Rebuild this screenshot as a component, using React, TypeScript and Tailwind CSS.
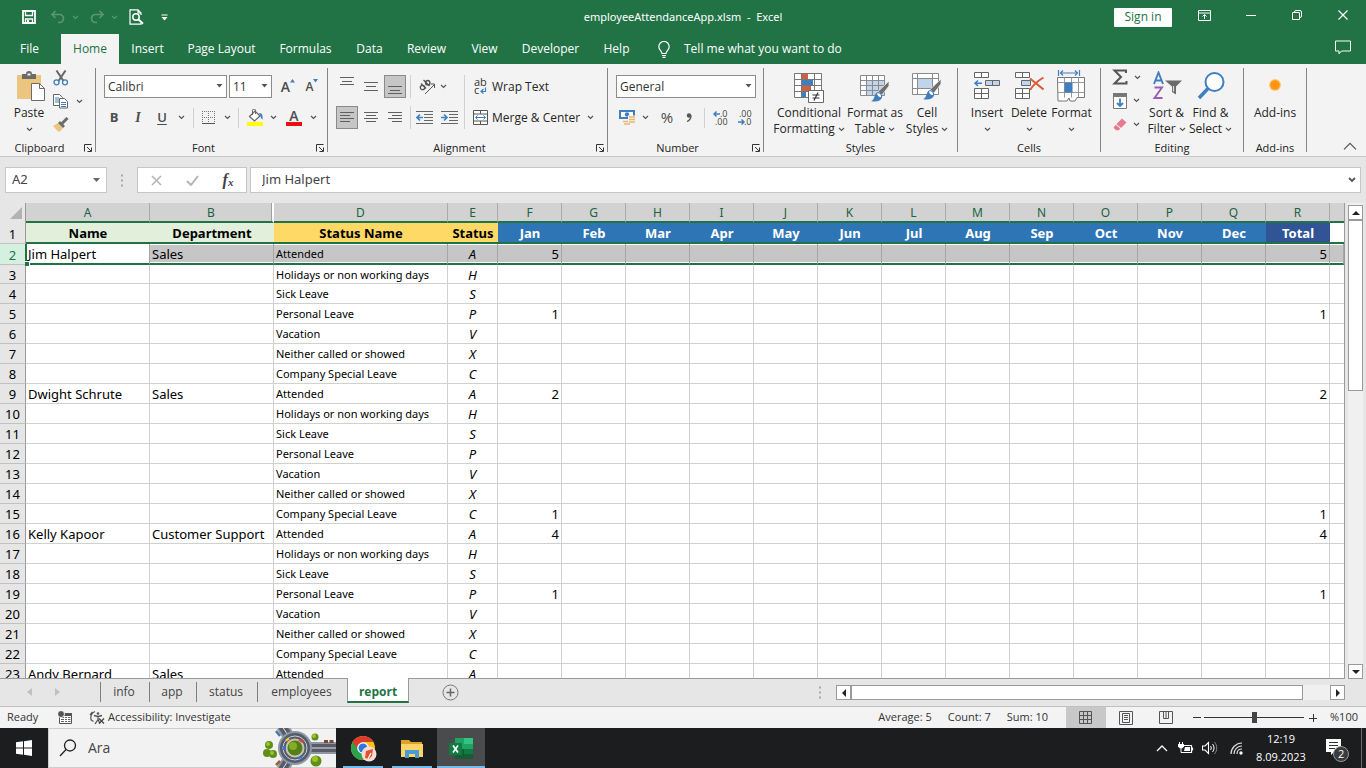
import React from "react";

type Kids = { children?: React.ReactNode };

const BLUE = "#3f7fbf";

/* ---------- small shared pieces ---------- */

function Icon({ w, h, children, className = "" }: Kids & { w: number; h: number; className?: string }) {
  return (
    <svg width={w} height={h} viewBox={`0 0 ${w} ${h}`} fill="none" className={`shrink-0 ${className}`} aria-hidden="true">
      {children}
    </svg>
  );
}

function Chevron({ color = "#555" }: { color?: string }) {
  return (
    <Icon w={7} h={5}>
      <path d="M1 1l2.5 2.4L6 1" stroke={color} strokeWidth="1.2" />
    </Icon>
  );
}

function Btn({ label, className = "", children }: Kids & { label: string; className?: string }) {
  return (
    <button type="button" aria-label={label} className={`flex shrink-0 items-center justify-center ${className}`}>
      {children}
    </button>
  );
}

function Sep({ className = "" }: { className?: string }) {
  return <span className={`w-px shrink-0 bg-[#d0d0d0] ${className}`} />;
}

function Drop({ label, value, className }: { label: string; value: string; className: string }) {
  return (
    <span className={`relative flex h-[23px] shrink-0 ${className}`}>
      <select aria-label={label} defaultValue={value} className="w-full appearance-none rounded-none border border-[#8c8c8c] bg-white pl-[3px] text-xs text-[#333]">
        <option>{value}</option>
      </select>
      <Icon w={7} h={4} className="pointer-events-none absolute top-[9px] right-1">
        <path d="M0.5 0h6l-3 3.5z" fill="#555" />
      </Icon>
    </span>
  );
}

function Group({ label, width, launcher, children }: Kids & { label: string; width: string; launcher?: boolean }) {
  return (
    <>
      <section aria-label={label} className={`flex shrink-0 flex-col ${width}`}>
        <div className="h-[76px]">{children}</div>
        <div className="flex h-4 items-center text-[11px] leading-4 text-[#222]">
          <span className="flex-1 text-center">{label}</span>
          {launcher && (
            <Btn label={`${label} settings`} className="w-4">
              <Icon w={8} h={8} className="ml-px">
                <path d="M7.5 0.5h-7v7M3 3l4 4M7.5 3.5v4h-4" stroke="#333" />
              </Icon>
            </Btn>
          )}
        </div>
      </section>
      <span className="mt-1 h-[84px] w-px shrink-0 bg-[#858585]" />
    </>
  );
}

function Big({ lines, width, drop, inlineDrop, children }: Kids & { lines: string[]; width: string; drop?: boolean; inlineDrop?: boolean }) {
  return (
    <button type="button" className={`flex shrink-0 flex-col items-center pt-1.5 text-xs leading-4 text-[#262626] ${width}`}>
      <span className="mb-[3px] flex h-8 items-center justify-center">{children}</span>
      <span className="whitespace-nowrap">{lines[0]}</span>
      {lines[1] && (
        <span className="flex items-center gap-[3px] whitespace-nowrap">
          {lines[1]}
          {inlineDrop && <Chevron />}
        </span>
      )}
      {drop && (
        <span className="flex h-4 items-center">
          <Chevron />
        </span>
      )}
    </button>
  );
}

/* ---------- title bar ---------- */

function TitleBar() {
  return (
    <header className="grid h-[34px] shrink-0 grid-cols-[1fr_auto_1fr] items-center text-white">
      <div className="flex items-center pl-[18px]">
        <Btn label="Save" className="w-[22px]">
          <Icon w={14} h={14}>
            <path d="M1 1h12v12H1z" stroke="#fff" strokeWidth="1.8" />
            <path d="M3.5 1.5v4h7v-4M3.5 13V9h7v4" stroke="#fff" strokeWidth="1.3" />
            <path d="M5 10h2v3H5z" fill="#fff" />
          </Icon>
        </Btn>
        <Btn label="Undo" className="ml-[7px] w-[22px]">
          <Icon w={16} h={14}>
            <path d="M5.5 1L2 4.5 5.5 8M2 4.5h7.5a4 4 0 010 8H8" stroke="#5b9573" strokeWidth="1.7" />
          </Icon>
        </Btn>
        <Btn label="Undo list" className="w-3">
          <Chevron color="#5b9573" />
        </Btn>
        <Btn label="Redo" className="ml-[5px] w-[22px]">
          <Icon w={16} h={14}>
            <path d="M10.5 1L14 4.5 10.5 8M14 4.5H6.5a4 4 0 000 8H8" stroke="#5b9573" strokeWidth="1.7" />
          </Icon>
        </Btn>
        <Btn label="Redo list" className="w-3">
          <Chevron color="#5b9573" />
        </Btn>
        <Btn label="Print preview" className="ml-[5px] w-[22px]">
          <Icon w={15} h={16}>
            <path d="M12 6V4L9 0.8H1v14.4h11V14M9 1v3h3" stroke="#fff" strokeWidth="1.2" />
            <circle cx="7" cy="8" r="3.2" stroke="#fff" strokeWidth="1.5" />
            <path d="M9.5 10.5l4.500 4.300" stroke="#fff" strokeWidth="2" />
          </Icon>
        </Btn>
        <Btn label="Customize toolbar" className="ml-[7px] w-5">
          <Icon w={7} h={7}>
            <path d="M0.5 1h6" stroke="#fff" />
            <path d="M0.5 3h6l-3 3.500z" fill="#fff" />
          </Icon>
        </Btn>
      </div>
      <h1 className="pt-px font-['Noto_Sans',sans-serif] text-[11px] whitespace-pre">employeeAttendanceApp.xlsm  -  Excel</h1>
      <div className="flex items-center justify-end">
        <button type="button" className="h-[19px] w-[58px] rounded-[1px] bg-white text-xs leading-4 text-[#217346]">
          Sign in
        </button>
        <Btn label="Ribbon display options" className="ml-[9px] h-8 w-[47px]">
          <Icon w={13} h={11} className="-mt-1">
            <path d="M0.5 0.5h12v10H0.500zM0.500 3h12M6.500 9V4.500M4.500 6.500l2-2 2 2" stroke="#fff" />
          </Icon>
        </Btn>
        <Btn label="Minimize" className="h-8 w-[46px]">
          <Icon w={10} h={11} className="-mt-1">
            <path d="M0 5.500h10" stroke="#fff" />
          </Icon>
        </Btn>
        <Btn label="Restore" className="h-8 w-[46px]">
          <Icon w={10} h={10} className="-mt-1">
            <path d="M0.500 2.500h7v7h-7zM2.500 2.500V2A1.500 1.500 0 014 .500h4A1.500 1.500 0 019.500 2v4A1.500 1.500 0 018 7.500h-.500" stroke="#fff" />
          </Icon>
        </Btn>
        <Btn label="Close" className="h-8 w-[46px]">
          <Icon w={10} h={10} className="-mt-1">
            <path d="M0.500 0.500l9 9M9.500 0.500l-9 9" stroke="#fff" strokeWidth="1.200" />
          </Icon>
        </Btn>
      </div>
    </header>
  );
}

const RIBBON_TABS = [
  { name: "File", w: "w-[59px] mr-0.5" },
  { name: "Home", w: "w-[58px]" },
  { name: "Insert", w: "w-[57px]" },
  { name: "Page Layout", w: "w-[91px]" },
  { name: "Formulas", w: "w-[77px]" },
  { name: "Data", w: "w-[51px]" },
  { name: "Review", w: "w-[63px]" },
  { name: "View", w: "w-[53px]" },
  { name: "Developer", w: "w-[79px]" },
  { name: "Help", w: "w-[53px]" },
];

function RibbonTabs() {
  return (
    <nav className="flex h-[30px] shrink-0 text-xs text-white">
      {RIBBON_TABS.map((t) => (
        <button key={t.name} type="button" className={`shrink-0 whitespace-nowrap ${t.w} ${t.name === "Home" ? "bg-[#f3f3f3] text-[#217346]" : ""}`}>
          {t.name}
        </button>
      ))}
      <button type="button" className="ml-[15px] flex items-center gap-3.5 whitespace-nowrap">
        <Icon w={12} h={17}>
          <path d="M4 12.500c0-2-3.200-3.500-3.200-6.800a5.200 5.200 0 0110.400 0c0 3.300-3.200 4.800-3.200 6.800zM4 14.500h4M4.500 16.300h3" stroke="#fff" strokeWidth="1.200" />
        </Icon>
        Tell me what you want to do
      </button>
      <Btn label="Comments" className="mr-[15px] ml-auto">
        <Icon w={16} h={15} className="-mt-1">
          <path d="M0.500 1h15v10H6.500L4 13.800V11H0.500z" stroke="#fff" />
        </Icon>
      </Btn>
    </nav>
  );
}

/* ---------- ribbon ---------- */

function Lines({ rows, h = 13 }: { rows: [number, number, number][]; h?: number }) {
  return (
    <Icon w={14} h={h}>
      {rows.map(([x1, x2, y]) => (
        <path key={y} d={`M${x1} ${y}H${x2}`} stroke="#5f5f5f" />
      ))}
    </Icon>
  );
}

function Clipboard() {
  return (
    <Group label="Clipboard" width="w-[95px]" launcher>
      <div className="flex">
        <Big lines={["Paste"]} width="ml-2 w-[42px]" drop>
          <Icon w={30} h={32} className="ml-1">
            <path d="M1 5h24v24H1z" fill="#ecc581" />
            <path d="M6 4h4a3 3 0 016 0h4v5H6z" fill="#6b6b6b" />
            <path d="M11.500 5.500h3V3.500h-3z" fill="#f3f3f3" />
            <path d="M15.500 13.500h8l5 5v12h-13z" fill="#fff" stroke="#6b6b6b" />
            <path d="M23.500 13.500v5h5" stroke="#6b6b6b" />
          </Icon>
        </Big>
        <div className="flex flex-col gap-[7px] pt-1.5">
          <Btn label="Cut" className="h-4 w-[22px]">
            <Icon w={16} h={16}>
              <path d="M3.500 0.500l7 10.500M12.500 0.500l-7 10.500" stroke="#666" strokeWidth="2" />
              <circle cx="3.500" cy="12.300" r="2.500" stroke={BLUE} strokeWidth="1.300" />
              <circle cx="12" cy="12.300" r="2.500" stroke={BLUE} strokeWidth="1.300" />
            </Icon>
          </Btn>
          <div className="flex h-4">
            <Btn label="Copy" className="w-[22px]">
              <Icon w={16} h={15}>
                <path d="M.500 .500h6l3 3v8h-9z" fill="#fff" stroke="#666" />
                <path d="M2 4h4M2 6h4M2 8h4" stroke={BLUE} />
                <path d="M6.500 4.500h5l3 3v6.500h-8z" fill="#fff" stroke="#666" />
                <path d="M8 8.500h5M8 10.500h5M8 12.500h5" stroke={BLUE} />
              </Icon>
            </Btn>
            <Btn label="Copy options" className="w-3.5">
              <Chevron />
            </Btn>
          </div>
          <Btn label="Format Painter" className="h-4 w-[22px]">
            <Icon w={16} h={15}>
              <path d="M0 9l5-3 5 5-3 3.500H5z" fill="#ecc581" />
              <path d="M5 6l2-2 5 5-2 2z" fill="#6b6b6b" />
              <path d="M9 6.500l5.500-5.500" stroke="#6b6b6b" strokeWidth="3" />
            </Icon>
          </Btn>
        </div>
      </div>
    </Group>
  );
}

function FontGroup() {
  return (
    <Group label="Font" width="w-[231px]" launcher>
      <div className="flex flex-col gap-2 pt-[11px] pl-2 text-[#4d4d4d]">
        <div className="flex h-[23px] gap-0.5">
          <Drop label="Font name" value="Calibri" className="w-[123px]" />
          <Drop label="Font size" value="11" className="w-[43px]" />
          <Btn label="Increase font size" className="w-6 pl-1 text-sm font-semibold">
            A
            <Icon w={5} h={4} className="mb-3">
              <path d="M0 3.500h5L2.500 0z" fill={BLUE} />
            </Icon>
          </Btn>
          <Btn label="Decrease font size" className="w-6 text-xs font-semibold">
            A
            <Icon w={5} h={4} className="mb-3">
              <path d="M0 0h5L2.500 3.500z" fill={BLUE} />
            </Icon>
          </Btn>
        </div>
        <div className="flex h-[23px] items-center">
          <Btn label="Bold" className="mr-1 w-5 text-[13px] font-bold">B</Btn>
          <Btn label="Italic" className="mr-1 w-5 font-['Liberation_Serif',serif] text-sm font-bold italic">I</Btn>
          <Btn label="Underline" className="w-5 text-[13px] font-semibold underline underline-offset-2">U</Btn>
          <Btn label="Underline options" className="h-5 w-[18px]"><Chevron /></Btn>
          <Sep className="mx-[3px] h-5" />
          <Btn label="Borders" className="w-[23px]">
            <Icon w={13} h={13}>
              <path d="M.500 0v13M6.500 0v13M12.500 0v13M0 .500h13M0 6.500h13" stroke="#777" strokeDasharray="1 1" />
              <path d="M0 12.500h13" stroke="#555" />
            </Icon>
          </Btn>
          <Btn label="Border options" className="h-5 w-3.5"><Chevron /></Btn>
          <Sep className="mx-1 h-5" />
          <Btn label="Fill color" className="w-6">
            <Icon w={16} h={17}>
              <path d="M2.500 7.500L8 2l5 5-5.500 5z" fill="#fff" stroke="#666" strokeWidth="1.200" />
              <path d="M5.500 6V1.500a1.500 1.500 0 013 0V5" stroke="#666" />
              <path d="M12 4c3 0 4 2 3.500 6.500C14.500 10 13.500 9 13.500 7z" fill={BLUE} />
              <path d="M0 13h16v4H0z" fill="#ff0" />
            </Icon>
          </Btn>
          <Btn label="Fill options" className="h-5 w-3"><Chevron /></Btn>
          <Btn label="Font color" className="ml-0.5 w-[26px] flex-col">
            <span className="text-sm leading-[13px] font-semibold">A</span>
            <span className="h-1 w-4 bg-[#e81010]" />
          </Btn>
          <Btn label="Font color options" className="h-5 w-3"><Chevron /></Btn>
        </div>
      </div>
    </Group>
  );
}

function Alignment() {
  const on = "border border-[#8a8a8a] bg-[#c6c6c6]";
  return (
    <Group label="Alignment" width="w-[279px]" launcher>
      <div className="flex pt-[11px] pl-2 text-xs text-[#262626]">
        <div className="flex flex-col gap-2">
          <div className="flex h-[23px] gap-0.5">
            <Btn label="Top Align" className="w-[22px] pb-2.5"><Lines h={9} rows={[[0, 14, 0.5], [2, 12, 4.5], [0, 14, 7.5]]} /></Btn>
            <Btn label="Middle Align" className="w-[22px]"><Lines h={9} rows={[[0, 14, 0.5], [2, 12, 4.5], [0, 14, 8.5]]} /></Btn>
            <Btn label="Bottom Align" className={`w-[22px] pt-2 ${on}`}><Lines h={9} rows={[[0, 14, 0.5], [2, 12, 4.5], [0, 14, 7.5]]} /></Btn>
            <Sep className="ml-0.5 h-full" />
            <Btn label="Orientation" className="w-6 pl-1">
              <Icon w={17} h={16}>
                <circle cx="3.500" cy="8.500" r="2.200" stroke="#555" strokeWidth="1.300" />
                <path d="M2 4.500l5 5M4.500 1l6 6" stroke="#555" strokeWidth="1.300" />
                <circle cx="8.700" cy="3.700" r="2.200" stroke="#555" strokeWidth="1.300" />
                <path d="M6 15L15.500 5.500M11.500 5h4v4" stroke="#555" />
              </Icon>
            </Btn>
            <Btn label="Orientation options" className="w-2"><Chevron /></Btn>
          </div>
          <div className="flex h-[23px] gap-0.5">
            <Btn label="Align Left" className={`w-[22px] ${on}`}><Lines rows={[[0, 14, 1.5], [0, 10, 4.5], [0, 14, 7.5], [0, 10, 10.5]]} /></Btn>
            <Btn label="Center" className="w-[22px]"><Lines rows={[[0, 14, 1.5], [2, 12, 4.5], [0, 14, 7.5], [2, 12, 10.5]]} /></Btn>
            <Btn label="Align Right" className="w-[22px]"><Lines rows={[[0, 14, 1.5], [4, 14, 4.5], [0, 14, 7.5], [4, 14, 10.5]]} /></Btn>
            <Sep className="ml-0.5 h-full" />
            <Btn label="Decrease Indent" className="w-[23px]">
              <Icon w={17} h={13}>
                <path d="M0 .500h17M8 3.500h9M8 6.500h9M8 9.500h9M0 12.500h17" stroke="#666" />
                <path d="M1 6.500h6M4 3.500l-3 3 3 3" stroke={BLUE} strokeWidth="1.600" />
              </Icon>
            </Btn>
            <Btn label="Increase Indent" className="w-[23px]">
              <Icon w={17} h={13}>
                <path d="M0 .500h17M8 3.500h9M8 6.500h9M8 9.500h9M0 12.500h17" stroke="#666" />
                <path d="M0 6.500h6M3 3.500l3 3-3 3" stroke={BLUE} strokeWidth="1.600" />
              </Icon>
            </Btn>
          </div>
        </div>
        <Sep className="mr-2 ml-[3px] h-[54px]" />
        <div className="flex flex-col gap-2">
          <button type="button" className="flex h-[23px] items-center gap-[3px]">
            <Icon w={16} h={17}>
              <text x="1" y="8" fontSize="11" fill="#333">ab</text>
              <text x="1" y="16" fontSize="11" fill="#333">c</text>
              <path d="M12.500 9.500v4H8.500M10.500 11l-2.500 2.500 2.500 2" stroke={BLUE} strokeWidth="1.200" />
            </Icon>
            Wrap Text
          </button>
          <div className="flex h-[23px] items-center">
            <button type="button" className="flex items-center gap-[3px] whitespace-nowrap">
              <Icon w={16} h={15}>
                <path d="M.500 .500h14v14H.500zM.500 4h14M.500 11h14M7.500 .500V4M7.500 11v3.500" fill="#fff" stroke="#555" />
                <path d="M2.500 7.500h10M4.500 5.500l-2 2 2 2M10.500 5.500l2 2-2 2" stroke={BLUE} />
              </Icon>
              Merge &amp; Center
            </button>
            <Btn label="Merge options" className="h-5 w-5"><Chevron /></Btn>
          </div>
        </div>
      </div>
    </Group>
  );
}

function NumberGroup() {
  return (
    <Group label="Number" width="w-[155px]" launcher>
      <div className="flex flex-col gap-2 pt-[11px] pl-2 text-[#4d4d4d]">
        <Drop label="Number format" value="General" className="w-[140px]" />
        <div className="flex h-[23px] items-center">
          <Btn label="Accounting format" className="w-[22px]">
            <Icon w={16} h={16}>
              <path d="M0 0h16v9H0z" fill={BLUE} />
              <path d="M2 2h12v5H2z" fill="#fff" />
              <circle cx="8" cy="4.500" r="2.200" fill={BLUE} />
              <path d="M9 5.500h7v8H9zM4 10h7v6H4z" fill="#f3f3f3" />
              <path d="M10 7h6M10 9.500h6M10 12h6M4 11.500h5M5 14h6" stroke="#e9b76b" strokeWidth="1.700" />
            </Icon>
          </Btn>
          <Btn label="Accounting options" className="h-5 w-3.5"><Chevron /></Btn>
          <Btn label="Percent style" className="ml-0.5 w-[26px] text-[15px]">%</Btn>
          <Btn label="Comma style" className="w-[18px]">
            <Icon w={6} h={9}>
              <circle cx="3" cy="2.500" r="2.200" fill="#555" />
              <path d="M5 2.500C5 5.500 3.500 7.500 1 8.500" stroke="#555" strokeWidth="1.300" />
            </Icon>
          </Btn>
          <Sep className="mr-1 ml-1.5 h-5" />
          <Btn label="Increase decimal" className="w-6">
            <Icon w={16} h={16}>
              <path d="M1 4h6M3.500 1.500L1 4l2.500 2.500" stroke={BLUE} strokeWidth="1.500" />
              <text x="7" y="7" fontSize="9" fill="#444">.0</text>
              <text x="2" y="15" fontSize="9" fill="#444">.00</text>
            </Icon>
          </Btn>
          <Btn label="Decrease decimal" className="w-6">
            <Icon w={16} h={16}>
              <path d="M1 12h6M4.500 9.500L7 12l-2.500 2.500" stroke={BLUE} strokeWidth="1.500" />
              <text x="2" y="7" fontSize="9" fill="#444">.00</text>
              <text x="7" y="15" fontSize="9" fill="#444">.0</text>
            </Icon>
          </Btn>
        </div>
      </div>
    </Group>
  );
}

function Brush({ x, y }: { x: number; y: number }) {
  return (
    <g transform={`translate(${x} ${y})`}>
      <path d="M18 0v5l-7 9-4-3.500z" fill="#707070" stroke="#f3f3f3" strokeWidth=".800" />
      <path d="M0 20c4-1 3-7 6-8.500 3-1 6 2 5 5-1 3.500-6 5-11 3.500z" fill={BLUE} />
      <path d="M6 12.500c2-1 4.500 1 4 3.500-2 .500-3.500-1-4-3.500z" fill="#fff" />
    </g>
  );
}

function Styles() {
  return (
    <Group label="Styles" width="w-[193px]">
      <div className="flex pl-2">
        <Big lines={["Conditional", "Formatting"]} width="w-[74px]" inlineDrop>
          <Icon w={30} h={30} className="mt-1">
            <path d="M.500 .500h27v24H.500z" fill="#fff" />
            <path d="M8 1h6v5H8zM8 13h9v5H8z" fill="#d0603f" />
            <path d="M8 7h11v5H8zM8 19h4v5H8z" fill={BLUE} />
            <path d="M.500 .500h27v24H.500zM.500 6.500h27M.500 12.500h27M.500 18.500h27M7.500 .500v24M20.500 .500v24" stroke="#777" />
            <path d="M14.500 17.500h15v12h-15z" fill="#fff" stroke="#666" />
            <path d="M18.500 22h7M18.500 25h7M24 19.500l-4 8" stroke="#333" strokeWidth="1.200" />
          </Icon>
        </Big>
        <Big lines={["Format as", "Table"]} width="w-14 ml-px" inlineDrop>
          <Icon w={30} h={30} className="mt-1">
            <path d="M.500 2.500h24v20H.500z" fill="#fff" />
            <path d="M7 8h17v14H7z" fill="#c0d5ea" />
            <path d="M.500 2.500h24v20H.500zM.500 7.500h24M.500 12.500h24M.500 17.500h24M6.500 2.500v20M12.500 2.500v20M18.500 2.500v20" stroke="#8a8a8a" />
            <Brush x={11} y={8} />
          </Icon>
        </Big>
        <Big lines={["Cell", "Styles"]} width="w-[46px] ml-px" inlineDrop>
          <Icon w={30} h={30} className="mt-1">
            <path d="M.500 .500h26v21H.500z" fill="#fff" />
            <path d="M6 6h15v9H6z" fill="#c0d5ea" />
            <path d="M.500 .500h26v21H.500zM.500 5.500h26M.500 15.500h26M5.500 .500v21M20.500 .500v21" stroke="#8a8a8a" />
            <Brush x={11} y={6} />
          </Icon>
        </Big>
      </div>
    </Group>
  );
}

function Cells() {
  return (
    <Group label="Cells" width="w-[142px]">
      <div className="flex pl-2">
        <Big lines={["Insert"]} width="w-[42px]" drop>
          <Icon w={28} h={30}>
            <path d="M1.500 1.500h14v5h-14zM8.500 1.500v5M1.500 17.500h14v10h-14zM8.500 17.500v10M1.500 22.500h14" fill="#fff" stroke="#666" />
            <path d="M12.500 9.500h14v5h-14zM19.500 9.500v5" fill="#c0d5ea" stroke="#666" />
            <path d="M2 12.200h7M5 9.500l-3 2.700 3 2.700" stroke={BLUE} strokeWidth="1.500" />
          </Icon>
        </Big>
        <Big lines={["Delete"]} width="w-[42px]" drop>
          <Icon w={30} h={30}>
            <path d="M1.500 1.500h14v5h-14zM8.500 1.500v5M1.500 17.500h14v10h-14zM8.500 17.500v10M1.500 22.500h14" fill="#fff" stroke="#666" />
            <path d="M7.500 9.500h9v5h-9z" fill="#c0d5ea" stroke="#666" />
            <path d="M16 7.500l13.500 11M29.500 6.500c-5 3-10 7-13.500 12.500" stroke="#dc5a3a" strokeWidth="2" />
          </Icon>
        </Big>
        <Big lines={["Format"]} width="w-[43px]" drop>
          <Icon w={29} h={32}>
            <path d="M.500 7.500h27v20H20l-2 3.500h-5l-1-3-2 3H1z" fill="#fff" stroke="#777" />
            <path d="M.500 12.500h27M.500 22.500h27M7.500 7.500v20M14.500 7.500v20M21.500 7.500v20" stroke="#999" />
            <path d="M7.500 12.500h8v10h-8z" fill={BLUE} />
            <path d="M1.500 0v6M22.500 0v6M3.500 3h17M6 .500L3.500 3 6 5.500M18 .500L20.500 3 18 5.500" stroke={BLUE} strokeWidth="1.200" />
          </Icon>
        </Big>
      </div>
    </Group>
  );
}

function Editing() {
  return (
    <Group label="Editing" width="w-[142px]">
      <div className="flex pl-[9px]">
        <div className="flex w-[35px] flex-col gap-[7px] pt-[5px]">
          <div className="flex h-4">
            <Btn label="AutoSum" className="w-5">
              <Icon w={16} h={16}>
                <path d="M14 4V1.500H2.500L9 8l-6.500 6.500H14.500V12" stroke="#555" strokeWidth="2" />
              </Icon>
            </Btn>
            <Btn label="AutoSum options" className="w-3.5"><Chevron /></Btn>
          </div>
          <div className="flex h-[17px]">
            <Btn label="Fill" className="w-5">
              <Icon w={14} h={16}>
                <path d="M.500 .500h13v15H.500z" fill="#fff" stroke="#777" />
                <path d="M0 0h14v4H0z" fill="#777" />
                <path d="M7 5.500V13M4 10l3 3 3-3" stroke={BLUE} strokeWidth="1.800" />
              </Icon>
            </Btn>
            <Btn label="Fill options" className="w-3"><Chevron /></Btn>
          </div>
          <div className="flex h-4">
            <Btn label="Clear" className="w-5">
              <Icon w={14} h={13}>
                <path d="M9 .500l4.500 4-5.500 5.500-4.500-4z" fill="#e8788e" />
                <path d="M2.800 6.700l4.500 4-1.600 1.600H3L.500 9.800z" fill="#e8788e" />
              </Icon>
            </Btn>
            <Btn label="Clear options" className="w-3"><Chevron /></Btn>
          </div>
        </div>
        <Big lines={["Sort &", "Filter"]} width="w-[43px]" inlineDrop>
          <Icon w={30} h={30}>
            <path d="M2 13L6.500 1.500 11 13M3.500 9.500h6" stroke={BLUE} strokeWidth="1.900" />
            <path d="M2.500 16.500h7.500L2.500 27H10.500" stroke="#9a5bb8" strokeWidth="1.900" />
            <path d="M13 9.500h17l-6 6v8l-4-2.500v-5.500z" fill="#6b6b6b" />
            <path d="M21.500 15v5.500" stroke="#ddd" strokeWidth="1.200" />
          </Icon>
        </Big>
        <Big lines={["Find &", "Select"]} width="w-[43px] ml-px" inlineDrop>
          <Icon w={28} h={30}>
            <circle cx="17.500" cy="11" r="9" fill="#fff" stroke={BLUE} strokeWidth="2" />
            <path d="M11 17.500L2 27" stroke={BLUE} strokeWidth="3.500" />
          </Icon>
        </Big>
      </div>
    </Group>
  );
}

function Ribbon() {
  return (
    <div className="flex h-[93px] shrink-0 border-b border-[#c8c8c8] bg-[#f3f3f3]">
      <Clipboard />
      <FontGroup />
      <Alignment />
      <NumberGroup />
      <Styles />
      <Cells />
      <Editing />
      <Group label="Add-ins" width="w-[62px]">
        <Big lines={["Add-ins"]} width="w-full">
          <Icon w={16} h={16} className="mb-0.5">
            <circle cx="8" cy="8" r="6" fill="#ffc878" />
            <circle cx="8" cy="8" r="4.800" fill="#ff9410" />
          </Icon>
        </Big>
      </Group>
      <Btn label="Collapse ribbon" className="mt-auto mr-2 mb-0.5 ml-auto h-4 w-4">
        <Icon w={14} h={8}>
          <path d="M1 7.300l6-6 6 6" stroke="#555" strokeWidth="1.200" />
        </Icon>
      </Btn>
    </div>
  );
}

/* ---------- formula bar ---------- */

function Dots() {
  return (
    <Icon w={2} h={13}>
      <path d="M0 1.500h2M0 6.500h2M0 11.500h2" stroke="#a8a8a8" strokeWidth="2" />
    </Icon>
  );
}

function FormulaBar() {
  return (
    <div className="flex h-[46px] shrink-0 items-start px-[5px] pt-2.5 font-['Noto_Sans',sans-serif] text-[13px] text-[#444]">
      <div className="flex h-[26px] w-[102px] shrink-0 items-center border border-[#c6c6c6] bg-white pr-1.5">
        <input aria-label="Name box" defaultValue="A2" className="w-full min-w-0 bg-transparent pl-1.5 outline-none" />
        <Icon w={7} h={4}><path d="M0 0h7L3.500 4z" fill="#666" /></Icon>
      </div>
      <span className="flex h-[26px] w-[30px] shrink-0 items-center justify-center"><Dots /></span>
      <div className="flex h-[26px] w-[110px] shrink-0 items-center border border-[#c6c6c6] bg-white">
        <Btn label="Cancel" className="w-9">
          <Icon w={11} h={11}><path d="M1 1l9 9M10 1l-9 9" stroke="#b5b5b5" strokeWidth="1.600" /></Icon>
        </Btn>
        <Btn label="Enter" className="w-9">
          <Icon w={13} h={11}><path d="M1 6l4 4 7-9" stroke="#b5b5b5" strokeWidth="2" /></Icon>
        </Btn>
        <Btn label="Insert function" className="w-9 font-['Liberation_Serif',serif] text-base font-bold italic">
          f<span className="mt-1 text-[11px]">x</span>
        </Btn>
      </div>
      <div className="ml-[3px] flex h-[26px] flex-1 items-center border border-[#c6c6c6] bg-white pr-1">
        <input aria-label="Formula" defaultValue="Jim Halpert" className="w-full min-w-0 bg-transparent pl-[11px] outline-none" />
        <Icon w={8} h={6}><path d="M1 1l3 3 3-3" stroke="#555" strokeWidth="1.800" /></Icon>
      </div>
    </div>
  );
}

/* ---------- sheet ---------- */

const MONTHS = ["Jan", "Feb", "Mar", "Apr", "May", "Jun", "Jul", "Aug", "Sep", "Oct", "Nov", "Dec"];
const STATUSES: [string, string][] = [
  ["Attended", "A"],
  ["Holidays or non working days", "H"],
  ["Sick Leave", "S"],
  ["Personal Leave", "P"],
  ["Vacation", "V"],
  ["Neither called or showed", "X"],
  ["Company Special Leave", "C"],
];
const PEOPLE: { name: string; dept: string; jan: Record<string, number> }[] = [
  { name: "Jim Halpert", dept: "Sales", jan: { A: 5, P: 1 } },
  { name: "Dwight Schrute", dept: "Sales", jan: { A: 2, C: 1 } },
  { name: "Kelly Kapoor", dept: "Customer Support", jan: { A: 4, P: 1 } },
  { name: "Andy Bernard", dept: "Sales", jan: {} },
];
const ROWS = PEOPLE.flatMap((p) =>
  STATUSES.map(([status, code], i) => ({
    name: i === 0 ? p.name : "",
    dept: i === 0 ? p.dept : "",
    status,
    code,
    count: p.jan[code],
  })),
).slice(0, 22);

function Sheet() {
  return (
    <div className="min-w-0 flex-1 overflow-hidden border-r border-b border-[#9a9a9a] bg-white">
      <table className="w-full table-fixed border-separate border-spacing-0 font-['Noto_Sans',sans-serif] text-[13px] leading-4 text-black">
        <colgroup>
          <col className="w-[26px]" />
          <col className="w-[124px]" />
          <col className="w-[124px]" />
          <col className="w-[174px]" />
          <col className="w-[50px]" />
          {MONTHS.map((m) => (
            <col key={m} className="w-16" />
          ))}
          <col className="w-16" />
          <col />
        </colgroup>
        <thead>
          <tr className="h-5 text-[#20633f]">
            <td className="border-r border-r-[#9a9a9a] bg-[#e6e6e6] p-0">
              <svg width="12" height="12" viewBox="0 0 12 12" className="ml-2.5" aria-hidden="true">
                <path d="M12 0v12H0z" fill="#b2b2b2" />
              </svg>
            </td>
            {["A", "B", "D", "E", "F", "G", "H", "I", "J", "K", "L", "M", "N", "O", "P", "Q", "R", ""].map((c) => (
              <th
                key={c}
                scope="col"
                className={`border-b-2 border-b-[#217346] bg-[#d2d2d2] p-0 pt-px text-xs font-normal ${
                  c === "B" ? "border-r-2 border-r-white shadow-[inset_-1px_0_0_#a0a0a0]" : c ? "border-r border-r-[#ababab]" : ""
                }`}
              >
                {c}
              </th>
            ))}
          </tr>
        </thead>
        <tbody>
          <tr className="h-[21px] font-bold [&>td]:border-b-2 [&>td]:border-b-[#217346] [&>td]:p-0 [&>td]:pt-px [&>td]:text-center">
            <th scope="row" className="border-r border-b border-r-[#9a9a9a] border-b-[#c0c0c0] bg-[#e6e6e6] p-0 pt-px font-normal">1</th>
            <td className="bg-[#e2efda]">Name</td>
            <td className="bg-[#e2efda]">Department</td>
            <td className="bg-[#ffd966]">Status Name</td>
            <td className="bg-[#ffd966]">Status</td>
            {MONTHS.map((m) => (
              <td key={m} className="bg-[#2e75b6] text-white">{m}</td>
            ))}
            <td className="bg-[#305496] text-white">Total</td>
            <td className="bg-white" />
          </tr>
          {ROWS.map((r, i) => {
            const sel = i === 0;
            const cell = sel
              ? "border-r border-r-[#a6a6a6] border-b-2 border-b-[#217346] bg-[#c6c6c6] shadow-[inset_0_1px_0_#fff,inset_0_-1px_0_#fff]"
              : "border-r border-b border-[#d0d0d0]";
            const height = sel ? "h-[21px]" : i === 1 ? "h-[19px]" : "h-5";
            return (
              <tr key={i} className={`${height} [&>td]:px-0.5 [&>td]:pt-px [&>td]:pb-0 [&>td]:whitespace-nowrap`}>
                <th
                  scope="row"
                  className={`border-r border-b border-b-[#c0c0c0] p-0 pt-px font-normal ${
                    sel ? "border-r-[#217346] bg-[#d3f0e0] text-[#217346]" : "border-r-[#9a9a9a] bg-[#e6e6e6]"
                  }`}
                >
                  {i + 2}
                </th>
                {sel ? (
                  <td className="relative border-r border-b-2 border-r-[#a6a6a6] border-b-[#217346] bg-white shadow-[inset_1px_0_0_#217346]">
                    {r.name}
                    <span className="absolute -bottom-[3px] -left-px size-[5px] border-t border-r border-white bg-[#217346]" />
                  </td>
                ) : (
                  <td className={cell}>{r.name}</td>
                )}
                <td className={cell}>{r.dept}</td>
                <td className={`${cell} text-[11px]`}>{r.status}</td>
                <td className={`${cell} text-center italic`}>{r.code}</td>
                {MONTHS.map((m) => (
                  <td key={m} className={`${cell} text-right`}>{m === "Jan" ? r.count : ""}</td>
                ))}
                <td className={`${cell} text-right`}>{r.count}</td>
                <td className={sel ? cell : "border-b border-[#d0d0d0]"} />
              </tr>
            );
          })}
        </tbody>
      </table>
    </div>
  );
}

function Arrow({ d }: { d: string }) {
  return (
    <Icon w={8} h={8}>
      <path d={d} fill="#222" />
    </Icon>
  );
}

function VScroll() {
  return (
    <div className="mr-[3px] ml-[3px] flex w-[15px] shrink-0 flex-col bg-[#f0f0f0] pt-0.5">
      <Btn label="Scroll up" className="h-[15px] border border-[#9a9a9a] bg-white"><Arrow d="M0 6h8L4 2z" /></Btn>
      <span className="h-[171px] border border-[#9a9a9a] bg-white" />
      <Btn label="Scroll down" className="mt-auto h-[15px] border border-[#9a9a9a] bg-white"><Arrow d="M0 2h8L4 6z" /></Btn>
    </div>
  );
}

const SHEETS = [
  { name: "info", w: "w-[49px] pr-0.5" },
  { name: "app", w: "w-[47px] pr-0.5" },
  { name: "status", w: "w-[61px] pr-0.5" },
  { name: "employees", w: "w-[90px] pr-0.5" },
];

function SheetTabs() {
  return (
    <div className="flex h-7 shrink-0 items-start border-b border-[#c0c0c0] text-xs text-[#444]">
      <Btn label="Previous sheet" className="ml-[15px] h-[26px] w-7"><Icon w={5} h={8}><path d="M5 0v8L0 4z" fill="#c0c0c0" /></Icon></Btn>
      <Btn label="Next sheet" className="h-[26px] w-7"><Icon w={5} h={8}><path d="M0 0v8l5-4z" fill="#c0c0c0" /></Icon></Btn>
      <div className="ml-[29px] flex">
        {SHEETS.map((s) => (
          <button key={s.name} type="button" className={`mt-[3px] h-5 border-l border-[#808080] ${s.w}`}>
            {s.name}
          </button>
        ))}
        <button type="button" className="-mt-px h-[25px] w-[62px] border-x border-b-2 border-x-[#9a9a9a] border-b-[#217346] bg-white pt-1 font-bold text-[#217346]">
          report
        </button>
      </div>
      <Btn label="New sheet" className="ml-8 h-[26px] w-[18px]">
        <Icon w={17} h={17}>
          <circle cx="8.500" cy="8.500" r="7.500" stroke="#777" />
          <path d="M8.500 4.500v8M4.500 8.500h8" stroke="#666" strokeWidth="1.500" />
        </Icon>
      </Btn>
      <div className="mt-1.5 mr-[21px] ml-auto flex h-[15px] items-center">
        <span className="mr-[15px]"><Dots /></span>
        <Btn label="Scroll left" className="h-[15px] w-[15px] border border-[#9a9a9a] bg-white"><Arrow d="M6 0v8L2 4z" /></Btn>
        <span className="h-[15px] w-[452px] border border-[#9a9a9a] bg-white" />
        <span className="h-[15px] w-[27px] bg-[#f0f0f0]" />
        <Btn label="Scroll right" className="h-[15px] w-[15px] border border-[#9a9a9a] bg-white"><Arrow d="M2 0v8l4-4z" /></Btn>
      </div>
    </div>
  );
}

function StatusBar() {
  return (
    <div className="flex h-[21px] shrink-0 items-center bg-[#f3f3f3] text-[11px] whitespace-nowrap text-[#333]">
      <span className="ml-[7px] w-[51px]">Ready</span>
      <Btn label="Macro recording" className="w-[14px]">
        <Icon w={14} h={13}>
          <path d="M1.500 2.500h12v10h-12z" fill="#fff" stroke="#555" />
          <path d="M1 2h13v3H1z" fill="#555" />
          <path d="M3 6.500h3M7 6.500h2M10 6.500h2.500M3 8.500h3M7 8.500h2M10 8.500h2.500M3 10.500h3M7 10.500h2M10 10.500h2.500" stroke="#666" />
          <circle cx="3" cy="3" r="3.500" fill="#555" stroke="#f3f3f3" />
        </Icon>
      </Btn>
      <button type="button" className="ml-[17px] flex items-center gap-[3px]">
        <Icon w={16} h={15}>
          <path d="M6 1.500A6 6 0 002.500 10M1 5l2.500-3M1.500 9.500l3 2" stroke="#555" strokeWidth="1.200" />
          <path d="M5 5.500l4 1 4-1M9 6.500v3l-3 4.500M9 9.500l2 4" stroke="#555" strokeWidth="1.300" />
          <circle cx="9" cy="3.500" r="1.300" fill="#555" />
          <path d="M10 8.500l5 5M15 8.500l-5 5" stroke="#444" strokeWidth="1.300" />
        </Icon>
        Accessibility: Investigate
      </button>
      <div className="ml-auto flex h-full items-center">
        <span className="mr-4">Average: 5</span>
        <span className="mr-4">Count: 7</span>
        <span className="mr-[18px]">Sum: 10</span>
        <Btn label="Normal view" className="h-full w-10 bg-[#c8c8c8]">
          <Icon w={14} h={14}><path d="M.500 .500h12v12H.500zM4.500 .500v12M8.500 .500v12M.500 4.500h12M.500 8.500h12" stroke="#555" /></Icon>
        </Btn>
        <Btn label="Page layout view" className="h-full w-10">
          <Icon w={14} h={14}><path d="M.500 .500h13v13H.500zM3.500 2.500h7v9h-7zM5 4.500h4M5 6.500h4M5 8.500h4" stroke="#555" /></Icon>
        </Btn>
        <Btn label="Page break view" className="h-full w-10">
          <Icon w={14} h={13}><path d="M.500 .500h13v12H.500zM4.500 .500v7h5v-7M7 .500v7" stroke="#555" /></Icon>
        </Btn>
        <Btn label="Zoom out" className="ml-[3px] h-full w-[15px]"><Icon w={8} h={8}><path d="M0 3.500h8" stroke="#333" /></Icon></Btn>
        <input
          type="range"
          aria-label="Zoom"
          defaultValue={50}
          className="h-3 w-[100px] appearance-none bg-[linear-gradient(#333,#333)] bg-[length:100%_1px] bg-center bg-no-repeat [&::-webkit-slider-thumb]:h-[11px] [&::-webkit-slider-thumb]:w-[5px] [&::-webkit-slider-thumb]:appearance-none [&::-webkit-slider-thumb]:bg-[#444]"
        />
        <Btn label="Zoom in" className="h-full w-[18px]"><Icon w={8} h={8}><path d="M0 4.500h8M4.500 0v8" stroke="#333" /></Icon></Btn>
        <span className="w-[44px] pr-2 text-right">%100</span>
      </div>
    </div>
  );
}

/* ---------- taskbar ---------- */

function Roundabout() {
  return (
    <Icon w={74} h={40}>
      <path d="M20 -2l9 14M20 42l9-14M46 20h30" stroke="#8e97a5" strokeWidth="12" />
      <path d="M20 -2l9 14M20 42l9-14M46 20h30" stroke="#565c69" strokeWidth="8" />
      <path d="M20 -2l9 14M20 42l9-14M46 20h30" stroke="#dfe2e8" strokeWidth="1" />
      <circle cx="33" cy="20" r="17" fill="#8e97a5" />
      <circle cx="33" cy="20" r="15" fill="#565c69" />
      <circle cx="33" cy="20" r="12" fill="none" stroke="#c7ccd5" />
      <circle cx="33" cy="20" r="9.500" fill="#cbc3b0" />
      <circle cx="33" cy="20" r="7.500" fill="#527f18" />
      <circle cx="31" cy="18" r="4" fill="#86ac25" />
      <path d="M37 11.500l4 2.500" stroke="#d3453a" strokeWidth="2.500" />
      <path d="M22.500 18v4M36 30.500l4-2" stroke="#2f6fd8" strokeWidth="2.500" />
      <path d="M24 12.500l3-2" stroke="#e8c740" strokeWidth="2.500" />
      <path d="M14 3l4 5" stroke="#4b77a5" strokeWidth="2.500" />
      <path d="M14 37l4-4" stroke="#a05a2c" strokeWidth="2.500" />
      <path d="M62 13.500h4M67.500 13.500h4" stroke="#7d4a2a" strokeWidth="3" />
      <g fill="#5f8f17">
        <circle cx="7" cy="17" r="4" />
        <circle cx="5" cy="25" r="4" />
        <circle cx="11" cy="26" r="4" />
        <circle cx="53" cy="9" r="3.500" />
        <circle cx="54" cy="33" r="5.500" />
      </g>
      <g fill="#9cc22c">
        <circle cx="6" cy="16" r="2" />
        <circle cx="10" cy="25" r="2" />
        <circle cx="52" cy="8" r="2" />
        <circle cx="53" cy="31" r="3" />
      </g>
    </Icon>
  );
}

function Taskbar() {
  return (
    <footer className="flex h-10 shrink-0 bg-[#1c1d1f] text-white">
      <Btn label="Start" className="w-12">
        <Icon w={16} h={16}>
          <path d="M0 2.300l7-1v6.200H0zM8 1.200L16 0v7.500H8zM0 8.500h7v6.200l-7-1zM8 8.500h8V16l-8-1.200z" fill="#fff" />
        </Icon>
      </Btn>
      <label className="flex h-10 w-[288px] shrink-0 items-center border-y border-l border-[#cfcfcf] bg-[#f2f2f2]">
        <Icon w={18} h={18} className="mr-[11px] ml-[10px]">
          <circle cx="11" cy="6.500" r="5.500" stroke="#222" strokeWidth="1.300" />
          <path d="M7 10.500L1 17" stroke="#222" strokeWidth="1.300" />
        </Icon>
        <span className="sr-only">Search</span>
        <input placeholder="Ara" className="w-full min-w-0 bg-transparent text-sm outline-none placeholder:text-[#444]" />
        <Roundabout />
      </label>
      <Btn label="Chrome" className="ml-[7px] w-10 border-b-2 border-[#76b9ed] pt-1 pl-0.5">
        <Icon w={28} h={28}>
          <circle cx="13" cy="13" r="12" fill="#fbc116" />
          <path d="M2.600 7a12 12 0 0010.400 18l5-9-5-3z" fill="#2ba24c" />
          <path d="M2.600 7L8 16l5-3-3-6z" fill="#2ba24c" />
          <path d="M2.600 7A12 12 0 0123.400 7H12l-4 7z" fill="#df3a2e" />
          <circle cx="13" cy="13" r="5.800" fill="#fff" />
          <circle cx="13" cy="13" r="4.500" fill="#2f76e0" />
          <circle cx="19" cy="19" r="7.500" fill="#f6dcd6" />
          <path d="M16 16l7-2-1 7-3 3-4-1z" fill="#e0532f" />
          <path d="M18 24l3-6" stroke="#fff" strokeWidth="1.200" />
        </Icon>
      </Btn>
      <Btn label="File Explorer" className="ml-[9px] w-10 border-b-2 border-[#76b9ed] pt-0.5">
        <Icon w={22} h={19}>
          <path d="M0 1h8l2 2h11v15H0z" fill="#dba22c" />
          <path d="M0 5h22v13H0z" fill="#fbd667" />
          <path d="M4 11h14v8h-4v-4H8v4H4z" fill="#4a9ad4" />
        </Icon>
      </Btn>
      <Btn label="Excel" className="ml-[5px] w-12 border-b-2 border-[#76b9ed] bg-[#4a4b4d] pt-0.5">
        <Icon w={24} h={21}>
          <path d="M6 0h9v11H6z" fill="#21a366" />
          <path d="M15 0h9v6h-9z" fill="#33c481" />
          <path d="M15 6h9v5h-9z" fill="#21a366" />
          <path d="M6 11h9v6H6z" fill="#185c37" />
          <path d="M15 11h9v5h-9z" fill="#107c41" />
          <path d="M6 16h18v5H6z" fill="#185c37" />
          <path d="M0 5h13v12H0z" fill="#107c41" />
          <path d="M4 7.500l5 7M9 7.500l-5 7" stroke="#fff" strokeWidth="1.700" />
        </Icon>
      </Btn>
      <div className="ml-auto flex items-center">
        <Btn label="Hidden icons" className="w-6"><Icon w={12} h={8}><path d="M1 7l5-5 5 5" stroke="#fff" strokeWidth="1.300" /></Icon></Btn>
        <Btn label="Battery" className="w-6">
          <Icon w={16} h={13}>
            <path d="M5.500 3.500h8v7h-8M14.500 5.500v3" stroke="#fff" strokeWidth="1.200" />
            <path d="M7 5h5v4H6z" fill="#fff" />
            <path d="M1.500 0v2.500M4.500 0v2.500M3 6.500v4h3" stroke="#fff" />
            <path d="M0 2h6v2.500l-2 2H2l-2-2z" fill="#fff" />
          </Icon>
        </Btn>
        <Btn label="Volume" className="w-6">
          <Icon w={16} h={14}>
            <path d="M.500 5h2.500l3.500-3.500v11L3 9H.500z" stroke="#fff" strokeWidth="1.100" />
            <path d="M8.500 5c1 1.200 1 2.800 0 4M10.500 3c2 2.500 2 5.500 0 8" stroke="#fff" />
            <path d="M12.500 1c3 3.500 3 8.500 0 12" stroke="#888" />
          </Icon>
        </Btn>
        <Btn label="Network" className="w-7">
          <Icon w={13} h={13}>
            <path d="M1 12C1 6 6 1 12 1M4 12c0-4.500 3.500-8 8-8M7 12c0-3 2-5 5-5" stroke="#ddd" strokeWidth="1.200" />
            <circle cx="11" cy="11" r="1.700" fill="#fff" />
          </Icon>
        </Btn>
        <div className="ml-1 flex w-[54px] flex-col gap-0.5 text-center text-[11px] leading-4">
          <span>12:19</span>
          <span>8.09.2023</span>
        </div>
        <button type="button" aria-label="Notifications, 2 new" className="ml-[18px] w-[35px] pt-1">
          <Icon w={25} h={26}>
            <path d="M0 2h15v13H8l-3 3v-3H0z" fill="#fff" />
            <path d="M3 5.500h9M3 8.500h9M3 11.500h6" stroke="#333" />
            <circle cx="15" cy="17" r="7.500" fill="#3a3b3d" stroke="#999" />
            <text x="12" y="21" fontSize="11" fill="#fff">2</text>
          </Icon>
        </button>
        <span className="mr-[4px] h-full w-px bg-[#6a6a6a]" />
      </div>
    </footer>
  );
}

export default function App() {
  return (
    <div className="flex h-screen flex-col overflow-hidden bg-[#e6e6e6] font-['Open_Sans','Noto_Sans',sans-serif]">
      <div className="shrink-0 bg-[#217346]">
        <TitleBar />
        <RibbonTabs />
      </div>
      <Ribbon />
      <FormulaBar />
      <main className="flex min-h-0 flex-1">
        <Sheet />
        <VScroll />
      </main>
      <SheetTabs />
      <StatusBar />
      <Taskbar />
    </div>
  );
}
